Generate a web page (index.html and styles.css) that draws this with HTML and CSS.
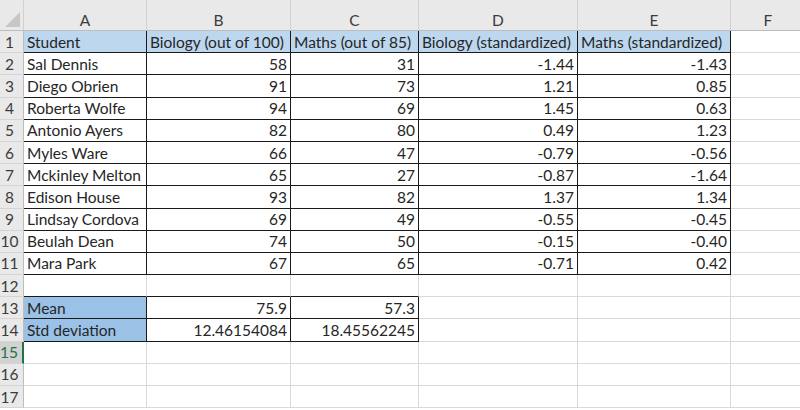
FILE: index.html
```html
<!DOCTYPE html>
<html>
<head>
<meta charset="utf-8">
<link rel="stylesheet" href="styles.css">
</head>
<body>
<div class="sheet">
  <div class="corner"><span class="tri"></span></div>
  <div class="ch">A</div><div class="ch">B</div><div class="ch">C</div><div class="ch">D</div><div class="ch">E</div><div class="ch">F</div><div class="ch last"></div>

  <div class="rh">1</div>
  <div class="c hd b">Student</div><div class="c hd b">Biology (out of 100)</div><div class="c hd b">Maths (out of 85)</div><div class="c hd b">Biology (standardized)</div><div class="c hd b">Maths (standardized)</div><div class="c"></div><div class="c last"></div>

  <div class="rh">2</div>
  <div class="c b">Sal Dennis</div><div class="c b n">58</div><div class="c b n">31</div><div class="c b n">-1.44</div><div class="c b n">-1.43</div><div class="c"></div><div class="c last"></div>

  <div class="rh">3</div>
  <div class="c b">Diego Obrien</div><div class="c b n">91</div><div class="c b n">73</div><div class="c b n">1.21</div><div class="c b n">0.85</div><div class="c"></div><div class="c last"></div>

  <div class="rh">4</div>
  <div class="c b">Roberta Wolfe</div><div class="c b n">94</div><div class="c b n">69</div><div class="c b n">1.45</div><div class="c b n">0.63</div><div class="c"></div><div class="c last"></div>

  <div class="rh">5</div>
  <div class="c b">Antonio Ayers</div><div class="c b n">82</div><div class="c b n">80</div><div class="c b n">0.49</div><div class="c b n">1.23</div><div class="c"></div><div class="c last"></div>

  <div class="rh">6</div>
  <div class="c b">Myles Ware</div><div class="c b n">66</div><div class="c b n">47</div><div class="c b n">-0.79</div><div class="c b n">-0.56</div><div class="c"></div><div class="c last"></div>

  <div class="rh">7</div>
  <div class="c b">Mckinley Melton</div><div class="c b n">65</div><div class="c b n">27</div><div class="c b n">-0.87</div><div class="c b n">-1.64</div><div class="c"></div><div class="c last"></div>

  <div class="rh">8</div>
  <div class="c b">Edison House</div><div class="c b n">93</div><div class="c b n">82</div><div class="c b n">1.37</div><div class="c b n">1.34</div><div class="c"></div><div class="c last"></div>

  <div class="rh">9</div>
  <div class="c b">Lindsay Cordova</div><div class="c b n">69</div><div class="c b n">49</div><div class="c b n">-0.55</div><div class="c b n">-0.45</div><div class="c"></div><div class="c last"></div>

  <div class="rh">10</div>
  <div class="c b">Beulah Dean</div><div class="c b n">74</div><div class="c b n">50</div><div class="c b n">-0.15</div><div class="c b n">-0.40</div><div class="c"></div><div class="c last"></div>

  <div class="rh">11</div>
  <div class="c b">Mara Park</div><div class="c b n">67</div><div class="c b n">65</div><div class="c b n">-0.71</div><div class="c b n">0.42</div><div class="c"></div><div class="c last"></div>

  <div class="rh">12</div>
  <div class="c bb"></div><div class="c bb"></div><div class="c bb"></div><div class="c"></div><div class="c"></div><div class="c"></div><div class="c last"></div>

  <div class="rh">13</div>
  <div class="c b st">Mean</div><div class="c b n">75.9</div><div class="c b n">57.3</div><div class="c"></div><div class="c"></div><div class="c"></div><div class="c last"></div>

  <div class="rh">14</div>
  <div class="c b st">Std deviation</div><div class="c b n">12.46154084</div><div class="c b n">18.45562245</div><div class="c"></div><div class="c"></div><div class="c"></div><div class="c last"></div>

  <div class="rh sel">15</div>
  <div class="c"></div><div class="c"></div><div class="c"></div><div class="c"></div><div class="c"></div><div class="c"></div><div class="c last"></div>

  <div class="rh">16</div>
  <div class="c"></div><div class="c"></div><div class="c"></div><div class="c"></div><div class="c"></div><div class="c"></div><div class="c last"></div>

  <div class="rh">17</div>
  <div class="c"></div><div class="c"></div><div class="c"></div><div class="c"></div><div class="c"></div><div class="c"></div><div class="c last"></div>
</div>
</body>
</html>
```

FILE: styles.css
```css
html, body {
  margin: 0;
  padding: 0;
  background: #ffffff;
}
body {
  font-family: Lato, "Open Sans", "Liberation Sans", sans-serif;
  font-size: 15.5px;
  color: #262626;
  overflow: hidden;
}
.sheet {
  display: grid;
  grid-template-columns: 24px 123px 144px 128px 159px 153px 75px 1fr;
  grid-template-rows: 31px repeat(17, 22.2px);
  width: 800px;
}
.corner {
  background: #e9e9e9;
  border-right: 1px solid #d0d0d0;
  border-bottom: 1px solid #bdbdbd;
  box-sizing: border-box;
  position: relative;
}
.tri {
  position: absolute;
  right: 3px;
  bottom: 3px;
  width: 0;
  height: 0;
  border-left: 15px solid transparent;
  border-bottom: 15px solid #c7c7c7;
}
.ch {
  background: #e9e9e9;
  border-right: 1px solid #d0d0d0;
  border-bottom: 1px solid #bdbdbd;
  box-sizing: border-box;
  display: flex;
  align-items: flex-end;
  justify-content: center;
  padding-bottom: 1px;
  color: #3b3b3b;
}
.ch.last { border-right: none; }
.rh {
  background: #e9e9e9;
  border-right: 1px solid #bdbdbd;
  border-bottom: 1px solid #d4d4d4;
  box-sizing: border-box;
  display: flex;
  align-items: center;
  justify-content: center;
  padding-right: 4px;
  color: #3b3b3b;
}
.rh.sel {
  background: #d2d2d2;
  color: #217346;
  border-right: 2px solid #217346;
}
.c {
  border-right: 1px solid #d9d9d9;
  border-bottom: 1px solid #d9d9d9;
  box-sizing: border-box;
  display: flex;
  align-items: center;
  padding: 0 3px;
  white-space: nowrap;
  overflow: hidden;
}
.c.last { border-right: none; }
.c.b {
  border-right: 1px solid #1a1a1a;
  border-bottom: 1px solid #1a1a1a;
}
.c.bb {
  border-bottom: 1px solid #1a1a1a;
}
.c.n { justify-content: flex-end; }
.c.hd { background: #bdd7ee; }
.c.st { background: #9bc2e6; }
```
